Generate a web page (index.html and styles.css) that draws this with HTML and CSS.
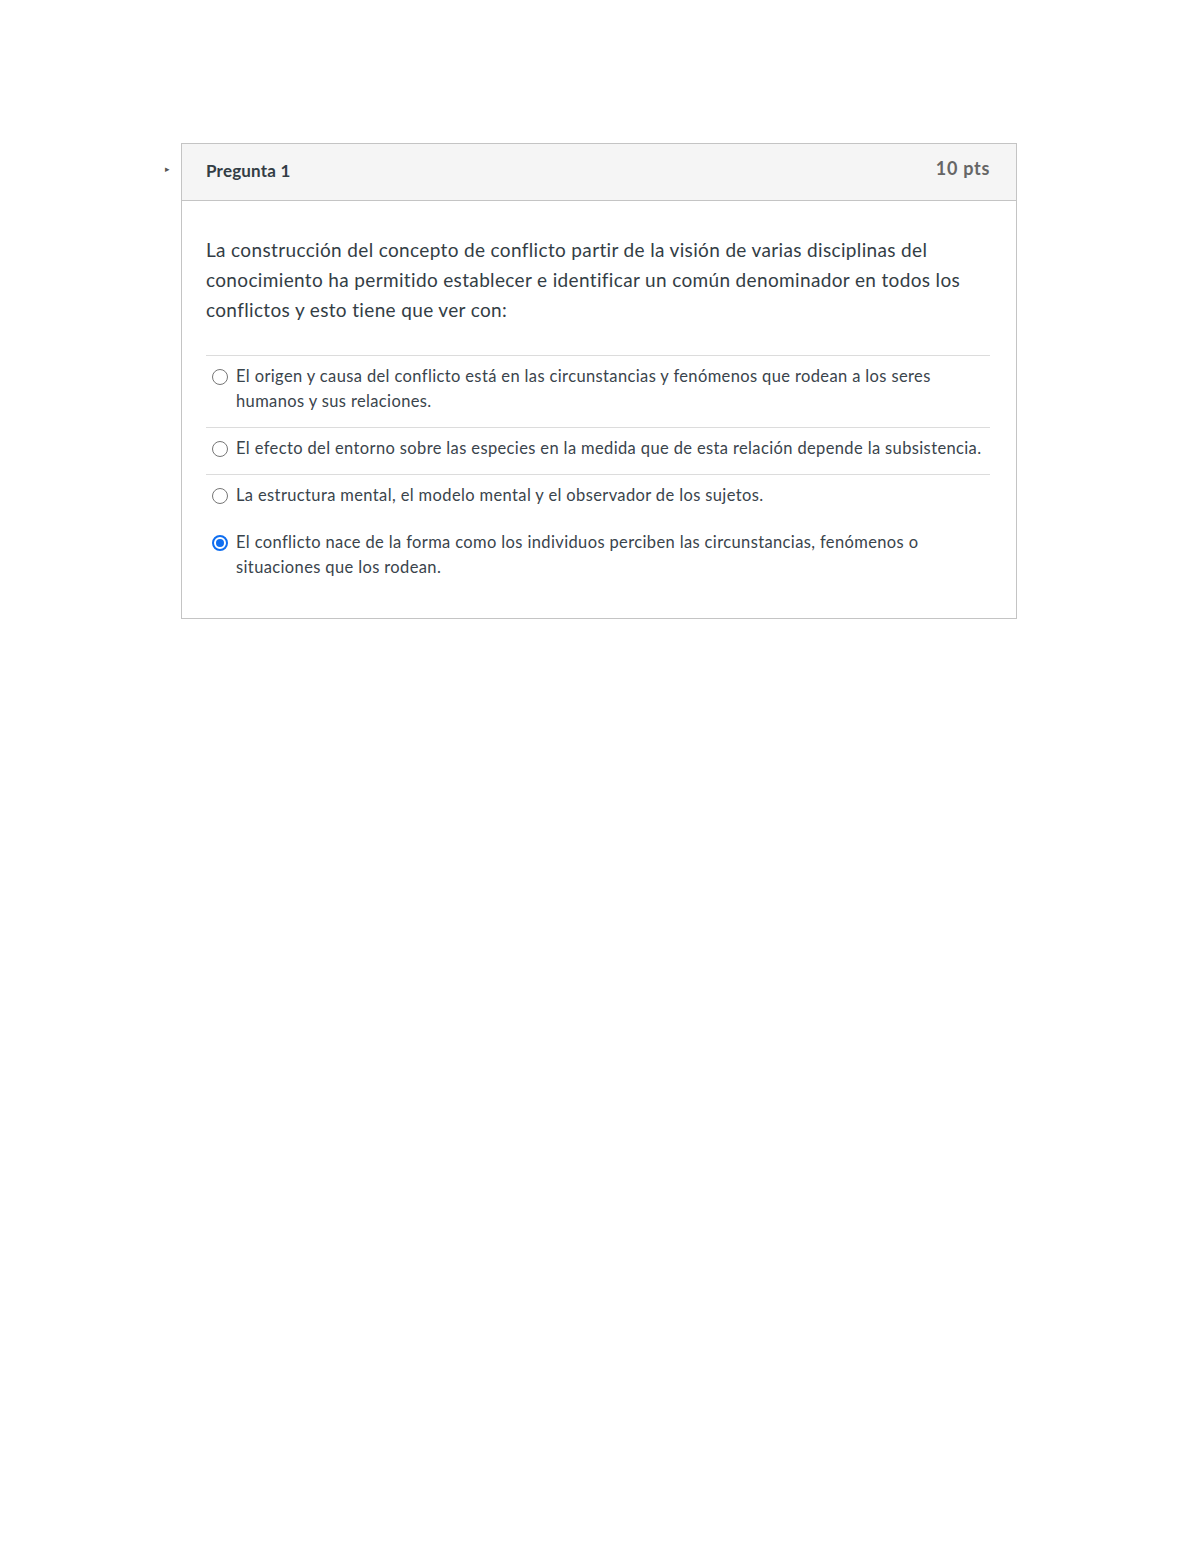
FILE: index.html
```html
<!DOCTYPE html>
<html lang="es">
<head>
<meta charset="utf-8">
<title>Pregunta 1</title>
<link rel="stylesheet" href="styles.css">
</head>
<body>
<div class="page">
  <div class="question-wrap">
    <span class="marker">&#9656;</span>
    <div class="card">
      <div class="card-header">
        <div class="q-title">Pregunta 1</div>
        <div class="q-points">10 pts</div>
      </div>
      <div class="card-body">
        <p class="q-text">La construcción del concepto de conflicto partir de la visión de varias disciplinas del conocimiento ha permitido establecer e identificar un común denominador en todos los conflictos y esto tiene que ver con:</p>
        <div class="answers">
          <div class="answer">
            <span class="radio"></span>
            <span class="answer-text">El origen y causa del conflicto está en las circunstancias y fenómenos que rodean a los seres humanos y sus relaciones.</span>
          </div>
          <div class="answer">
            <span class="radio"></span>
            <span class="answer-text">El efecto del entorno sobre las especies en la medida que de esta relación depende la subsistencia.</span>
          </div>
          <div class="answer">
            <span class="radio"></span>
            <span class="answer-text">La estructura mental, el modelo mental y el observador de los sujetos.</span>
          </div>
          <div class="answer no-border">
            <span class="radio checked"></span>
            <span class="answer-text">El conflicto nace de la forma como los individuos perciben las circunstancias, fenómenos o situaciones que los rodean.</span>
          </div>
        </div>
      </div>
    </div>
  </div>
</div>
</body>
</html>
```

FILE: styles.css
```css
* { box-sizing: border-box; }
html, body {
  margin: 0;
  padding: 0;
  background: #ffffff;
}
body {
  font-family: Lato, "Open Sans", "Liberation Sans", sans-serif;
  color: #2d3b45;
}
.page {
  padding-top: 143px;
  padding-left: 181px;
}
.question-wrap {
  position: relative;
  width: 836px;
}
.marker {
  position: absolute;
  left: -16px;
  top: 20px;
  font-size: 9px;
  color: #555;
}
.card {
  border: 1px solid #c4c4c4;
  background: #fff;
}
.card-header {
  background: #f5f5f5;
  border-bottom: 1px solid #c4c4c4;
  height: 57px;
  display: flex;
  justify-content: space-between;
  align-items: flex-start;
  padding: 0 26px 0 24px;
}
.q-title {
  font-weight: 700;
  font-size: 17px;
  letter-spacing: 0.2px;
  color: #333d45;
  margin-top: 16px;
}
.q-points {
  font-weight: 700;
  font-size: 18px;
  letter-spacing: 0.7px;
  color: #666;
  margin-top: 13px;
}
.card-body {
  padding: 34px 26px 25px 24px;
}
.q-text {
  margin: 0 0 30px 0;
  font-size: 19px;
  letter-spacing: 0.35px;
  line-height: 30px;
  color: #333d45;
}
.answer {
  display: flex;
  align-items: flex-start;
  border-top: 1px solid #dcdcdc;
  padding: 7.5px 0 13.5px 0;
}
.answer.no-border {
  border-top: none;
  padding-top: 8.5px;
}
.radio {
  flex: none;
  width: 16px;
  height: 16px;
  border-radius: 50%;
  border: 1px solid #767676;
  background: #fff;
  margin: 5px 8px 0 6px;
  position: relative;
}
.radio.checked {
  border: 2px solid #0f6ef0;
}
.radio.checked::after {
  content: "";
  position: absolute;
  left: 2px;
  top: 2px;
  width: 8px;
  height: 8px;
  border-radius: 50%;
  background: #0f6ef0;
}
.answer-text {
  font-size: 16.5px;
  letter-spacing: 0.37px;
  line-height: 25px;
  color: #3a444c;
}
```
